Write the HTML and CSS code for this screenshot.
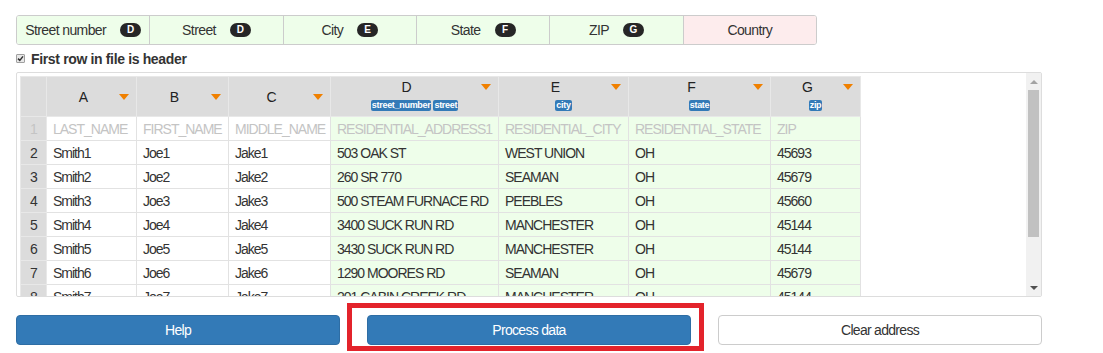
FILE: index.html
```html
<!DOCTYPE html>
<html>
<head>
    <meta charset="utf-8">
    <link rel="stylesheet" href="styles.css">
    <title>Address import</title>
</head>
<body>
    <div class="page">
        <div class="mapping">
            <div class="map-cell">Street number <span class="map-badge">D</span></div>
            <div class="map-cell">Street <span class="map-badge">D</span></div>
            <div class="map-cell">City <span class="map-badge">E</span></div>
            <div class="map-cell">State <span class="map-badge">F</span></div>
            <div class="map-cell">ZIP <span class="map-badge">G</span></div>
            <div class="map-cell map-missing">Country</div>
        </div>

        <label class="header-check">
            <span class="check-box">
                <svg width="7" height="7" viewBox="0 0 7 7"><path d="M1 3.6 L2.8 5.4 L6 1.4" fill="none" stroke="#333" stroke-width="1.5"/></svg>
            </span>
            First row in file is header
        </label>

        <div class="grid-box">
            <div class="grid-wrap">
                <table class="grid">
                    <colgroup>
                        <col class="c-row">
                        <col class="c-a">
                        <col class="c-b">
                        <col class="c-c">
                        <col class="c-d">
                        <col class="c-e">
                        <col class="c-f">
                        <col class="c-g">
                    </colgroup>
                    <thead>
                        <tr>
                            <th class="corner"></th>
                            <th><div class="head-line"><span class="col-letter">A</span><span class="caret"></span></div></th>
                            <th><div class="head-line"><span class="col-letter">B</span><span class="caret"></span></div></th>
                            <th><div class="head-line"><span class="col-letter">C</span><span class="caret"></span></div></th>
                            <th>
                                <div class="head-line"><span class="col-letter">D</span><span class="caret"></span></div>
                                <div class="tag-line"><span class="tag">street_number</span><span class="tag">street</span></div>
                            </th>
                            <th>
                                <div class="head-line"><span class="col-letter">E</span><span class="caret"></span></div>
                                <div class="tag-line"><span class="tag">city</span></div>
                            </th>
                            <th>
                                <div class="head-line"><span class="col-letter">F</span><span class="caret"></span></div>
                                <div class="tag-line"><span class="tag">state</span></div>
                            </th>
                            <th>
                                <div class="head-line"><span class="col-letter">G</span><span class="caret"></span></div>
                                <div class="tag-line"><span class="tag">zip</span></div>
                            </th>
                        </tr>
                    </thead>
                    <tbody>
                        <tr class="file-header">
                            <th class="row-num">1</th>
                            <td>LAST_NAME</td><td>FIRST_NAME</td><td>MIDDLE_NAME</td>
                            <td class="mapped">RESIDENTIAL_ADDRESS1</td><td class="mapped">RESIDENTIAL_CITY</td><td class="mapped">RESIDENTIAL_STATE</td><td class="mapped">ZIP</td>
                        </tr>
                        <tr>
                            <th class="row-num">2</th>
                            <td>Smith1</td><td>Joe1</td><td>Jake1</td>
                            <td class="mapped">503 OAK ST</td><td class="mapped">WEST UNION</td><td class="mapped">OH</td><td class="mapped">45693</td>
                        </tr>
                        <tr>
                            <th class="row-num">3</th>
                            <td>Smith2</td><td>Joe2</td><td>Jake2</td>
                            <td class="mapped">260 SR 770</td><td class="mapped">SEAMAN</td><td class="mapped">OH</td><td class="mapped">45679</td>
                        </tr>
                        <tr>
                            <th class="row-num">4</th>
                            <td>Smith3</td><td>Joe3</td><td>Jake3</td>
                            <td class="mapped">500 STEAM FURNACE RD</td><td class="mapped">PEEBLES</td><td class="mapped">OH</td><td class="mapped">45660</td>
                        </tr>
                        <tr>
                            <th class="row-num">5</th>
                            <td>Smith4</td><td>Joe4</td><td>Jake4</td>
                            <td class="mapped">3400 SUCK RUN RD</td><td class="mapped">MANCHESTER</td><td class="mapped">OH</td><td class="mapped">45144</td>
                        </tr>
                        <tr>
                            <th class="row-num">6</th>
                            <td>Smith5</td><td>Joe5</td><td>Jake5</td>
                            <td class="mapped">3430 SUCK RUN RD</td><td class="mapped">MANCHESTER</td><td class="mapped">OH</td><td class="mapped">45144</td>
                        </tr>
                        <tr>
                            <th class="row-num">7</th>
                            <td>Smith6</td><td>Joe6</td><td>Jake6</td>
                            <td class="mapped">1290 MOORES RD</td><td class="mapped">SEAMAN</td><td class="mapped">OH</td><td class="mapped">45679</td>
                        </tr>
                        <tr>
                            <th class="row-num">8</th>
                            <td>Smith7</td><td>Joe7</td><td>Jake7</td>
                            <td class="mapped">201 CABIN CREEK RD</td><td class="mapped">MANCHESTER</td><td class="mapped">OH</td><td class="mapped">45144</td>
                        </tr>
                    </tbody>
                </table>
            </div>
            <div class="scrollbar">
                <div class="sb-btn"><span class="sb-up"></span></div>
                <div class="sb-thumb"></div>
                <div class="sb-space"></div>
                <div class="sb-btn"><span class="sb-down"></span></div>
            </div>
        </div>

        <div class="actions">
            <button class="btn btn-blue btn-side">Help</button>
            <div class="highlight">
                <button class="btn btn-blue">Process data</button>
            </div>
            <button class="btn btn-white btn-side">Clear address</button>
        </div>
    </div>
</body>
</html>
```

FILE: styles.css
```css
body {
    margin: 0;
    font-family: "Liberation Sans", Arial, sans-serif;
    font-size: 14px;
    color: #333;
    background: white;
}
.page {
    width: 1026px;
    padding: 15px 0 0 16px;
}

/* column mapping bar */
.mapping {
    display: flex;
    width: 801px;
    height: 30px;
    box-sizing: border-box;
    border: 1px solid #ccc;
    border-radius: 3px;
    overflow: hidden;
}
.map-cell {
    flex: 1;
    display: flex;
    align-items: center;
    justify-content: center;
    gap: 14px;
    background-color: #eefeea;
    border-left: 1px solid #ccc;
    letter-spacing: -0.6px;
}
.map-cell:first-child {
    border-left: none;
}
.map-missing {
    background-color: #fdeced;
}
.map-badge {
    display: inline-block;
    width: 21px;
    height: 14px;
    line-height: 14px;
    border-radius: 7px;
    background-color: #262626;
    color: white;
    font-size: 10px;
    font-weight: bold;
    text-align: center;
    letter-spacing: 0;
}

/* checkbox */
.header-check {
    display: flex;
    align-items: center;
    gap: 6px;
    height: 27px;
    font-weight: bold;
    letter-spacing: -0.35px;
}
.check-box {
    display: flex;
    align-items: center;
    justify-content: center;
    width: 9px;
    height: 9px;
    box-sizing: border-box;
    border: 1px solid #a0a0a0;
    border-radius: 1px;
    background: #e8e8e8;
}

/* data grid */
.grid-box {
    display: flex;
    width: 1026px;
    height: 225px;
    box-sizing: border-box;
    border: 1px solid #ddd;
    border-radius: 2px;
    overflow: hidden;
}
.grid-wrap {
    flex: 1;
    padding: 3px 0 0 3px;
    overflow: hidden;
}
.grid {
    table-layout: fixed;
    border-collapse: collapse;
    width: 840px;
    letter-spacing: -1px;
}
.c-row { width: 26px; }
.c-a { width: 90px; }
.c-b { width: 92px; }
.c-c { width: 102px; }
.c-d { width: 168px; }
.c-e { width: 130px; }
.c-f { width: 142px; }
.c-g { width: 90px; }
.grid th {
    background-color: #dcdcdc;
    border: 1px solid #e8e8e8;
    font-weight: normal;
    padding: 0;
    vertical-align: middle;
}
.grid thead tr {
    height: 40px;
}
.grid tbody tr {
    height: 24px;
}
.grid td {
    border: 1px solid #e2e2e2;
    padding: 0 6px;
    white-space: nowrap;
    overflow: hidden;
}
.grid td.mapped {
    background-color: #eefeea;
}
.row-num {
    text-align: center;
}
.file-header td,
.file-header .row-num {
    color: #c4c4c4;
}
.head-line {
    display: flex;
    align-items: center;
    height: 18px;
}
.col-letter {
    flex: 1;
    text-align: center;
    color: #222;
}
.caret {
    width: 0;
    height: 0;
    border-left: 5px solid transparent;
    border-right: 5px solid transparent;
    border-top: 6px solid #f08000;
    margin-right: 7px;
}
.tag-line {
    display: flex;
    justify-content: center;
    align-items: center;
    gap: 2px;
    height: 20px;
}
.tag {
    display: inline-block;
    height: 11px;
    line-height: 11px;
    padding: 0 1px;
    border-radius: 2px;
    background-color: #337ab7;
    color: white;
    font-size: 9px;
    font-weight: bold;
    letter-spacing: -0.3px;
}

/* fake scrollbar */
.scrollbar {
    width: 15px;
    display: flex;
    flex-direction: column;
    background-color: #f1f1f1;
}
.sb-btn {
    height: 17px;
    display: flex;
    align-items: center;
    justify-content: center;
}
.sb-up {
    border-left: 4px solid transparent;
    border-right: 4px solid transparent;
    border-bottom: 4px solid #a3a3a3;
}
.sb-down {
    border-left: 4px solid transparent;
    border-right: 4px solid transparent;
    border-top: 4px solid #505050;
}
.sb-thumb {
    height: 147px;
    margin: 0 2px;
    background-color: #c1c1c1;
}
.sb-space {
    flex: 1;
}

/* buttons */
.actions {
    display: grid;
    grid-template-columns: 324px 324px 324px;
    column-gap: 27px;
    align-items: start;
    margin-top: 6px;
}
.btn {
    display: block;
    height: 30px;
    width: 100%;
    border-radius: 4px;
    font-family: "Liberation Sans", Arial, sans-serif;
    font-size: 14px;
    letter-spacing: -0.7px;
    cursor: pointer;
}
.btn-side {
    margin-top: 12px;
}
.btn-blue {
    background-color: #337ab7;
    border: 1px solid #2e6da4;
    color: white;
}
.btn-white {
    background-color: white;
    border: 1px solid #ccc;
    color: #333;
}
.highlight {
    border: 5px solid #e3232b;
    padding: 7px 8px 1px 15px;
    margin: 0 -13px 0 -20px;
}
```
